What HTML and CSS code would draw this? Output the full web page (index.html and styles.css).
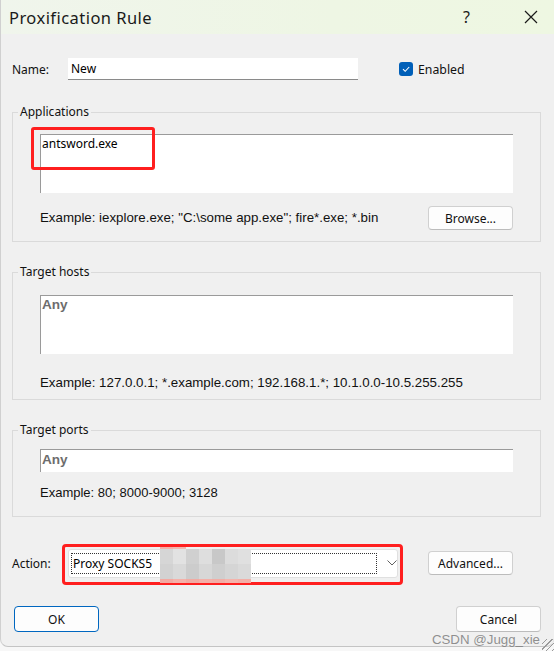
FILE: index.html
```html
<!DOCTYPE html>
<html>
<head>
<meta charset="utf-8">
<link rel="stylesheet" href="styles.css">
</head>
<body>
<div class="window">
  <div class="titlebar">
    <span class="title">Proxification Rule</span>
    <span class="help">?</span>
    <span class="close"><svg width="14" height="14" viewBox="0 0 14 14"><path d="M1 1 L13 13 M13 1 L1 13" stroke="#1a1a1a" stroke-width="1.2" fill="none"/></svg></span>
  </div>
  <div class="content">
    <div class="name-row">
      <span class="lbl name-lbl">Name:</span>
      <div class="name-input">New</div>
      <div class="check">
        <span class="box"><svg width="14" height="14" viewBox="0 0 14 14"><path d="M4 7.2 L6.2 9.3 L10.2 5" stroke="#fff" stroke-width="1.1" fill="none"/></svg></span>
        <span class="lbl">Enabled</span>
      </div>
    </div>

    <fieldset class="group g-apps">
      <legend>Applications</legend>
      <div class="inner">
        <div class="area area-apps">antsword.exe<div class="mark mark-apps"></div></div>
        <div class="example-row">
          <span class="example">Example: iexplore.exe; "C:\some app.exe"; fire*.exe; *.bin</span>
          <span class="btn">Browse...</span>
        </div>
      </div>
    </fieldset>

    <fieldset class="group g-hosts">
      <legend>Target hosts</legend>
      <div class="inner">
        <div class="area area-hosts"><span class="any">Any</span></div>
        <div class="example ex-hosts">Example: 127.0.0.1; *.example.com; 192.168.1.*; 10.1.0.0-10.5.255.255</div>
      </div>
    </fieldset>

    <fieldset class="group g-ports">
      <legend>Target ports</legend>
      <div class="inner">
        <div class="area area-ports"><span class="any">Any</span></div>
        <div class="example ex-ports">Example: 80; 8000-9000; 3128</div>
      </div>
    </fieldset>

    <div class="action-row">
      <span class="lbl action-lbl">Action:</span>
      <div class="combo">
        <div class="focus">Proxy SOCKS5</div>
        <svg class="chev" width="10" height="6" viewBox="0 0 10 6"><path d="M0.5 0.5 L5 5 L9.5 0.5" stroke="#606060" stroke-width="1" fill="none"/></svg>
        <div class="mark mark-action"></div>
        <div class="mosaic">
          <i style="background:#f3b0a8"></i><i style="background:#f0b8b0"></i><i style="background:transparent"></i><i style="background:transparent"></i><i style="background:transparent"></i><i style="background:transparent"></i><i style="background:transparent"></i>
          <i style="background:#d6d6d6"></i><i style="background:#e2e2e2"></i><i style="background:#d0d0d0"></i><i style="background:#dedede"></i><i style="background:#c8c8c8"></i><i style="background:#dcdcdc"></i><i style="background:#e0e0e0"></i>
          <i style="background:#d2d2d2"></i><i style="background:#d9d9d9"></i><i style="background:#cccccc"></i><i style="background:#d7d7d7"></i><i style="background:#cfcfcf"></i><i style="background:#d5d5d5"></i><i style="background:#dadada"></i>
          <i style="background:#f2aaa2"></i><i style="background:#f4b2aa"></i><i style="background:#f0aca4"></i><i style="background:#f3b0a8"></i><i style="background:#f1aea6"></i><i style="background:#f4b4ac"></i><i style="background:#f2b0a8"></i>
        </div>
      </div>
      <span class="btn btn-adv">Advanced...</span>
    </div>

    <div class="buttons-row">
      <span class="btn btn-ok">OK</span>
      <span class="btn btn-cancel">Cancel</span>
    </div>
    <span class="watermark">CSDN @Jugg_xie</span>
  </div>
</div>
<div class="grip"></div>
</body>
</html>
```

FILE: styles.css
```css
html, body {
  margin: 0;
  padding: 0;
}
body {
  width: 554px;
  height: 651px;
  background: #f7f7f7;
  position: relative;
  overflow: hidden;
  font-family: "Liberation Sans", Arial, sans-serif;
  font-size: 12px;
  color: #000;
}
.window {
  width: 554px;
  height: 647px;
  background: #f0f0f0;
  border-bottom: 1px solid #c4c4c4;
  border-left: 1px solid #d0d0d0;
  box-sizing: border-box;
  border-radius: 0 0 8px 8px;
  position: relative;
}
.titlebar {
  height: 34px;
  background: linear-gradient(90deg, #f0f5ec 0%, #eef6e4 60%, #eef7e2 100%);
  display: flex;
  align-items: center;
  font-family: "Noto Sans", "Open Sans", sans-serif;
}
.title {
  font-size: 16.5px;
  letter-spacing: 0.45px;
  color: #1a1a1a;
  margin-left: 8px;
  flex: 1;
}
.help {
  font-size: 16px;
  color: #1a1a1a;
  width: 16px;
  margin-right: 45px;
}
.close {
  display: flex;
  margin-right: 16px;
}
.content {
  padding: 24px 13px 0 11px;
  position: relative;
}
.lbl {
  font-family: "Noto Sans", "Open Sans", sans-serif;
  font-size: 12px;
  color: #111;
}
.name-row {
  display: flex;
  align-items: center;
  height: 22px;
}
.name-lbl {
  width: 56px;
}
.name-input {
  width: 290px;
  height: 22px;
  box-sizing: border-box;
  background: #fff;
  border-bottom: 1px solid #8a8a8a;
  padding: 2px 3px 0;
  font-family: "Noto Sans", "Open Sans", sans-serif;
  font-size: 12px;
  line-height: 17px;
}
.check {
  display: flex;
  align-items: center;
  margin-left: 41px;
}
.box {
  width: 14px;
  height: 14px;
  background: #005fb8;
  border-radius: 3px;
  display: flex;
  margin-right: 5px;
}
.box svg { display: block; }
.check .lbl { font-size: 12.3px; }

.group {
  margin: 24px 0 0 0;
  padding: 0;
  border: 1px solid #dadada;
  min-width: 0;
}
.group legend {
  font-family: "Noto Sans", "Open Sans", sans-serif;
  font-size: 12px;
  line-height: 16px;
  padding: 0 2px;
  margin-left: 5px;
  color: #111;
}
.g-hosts, .g-ports { margin-top: 22px; }
.inner {
  padding: 0 27px;
}
.area {
  background: #fff;
  border-top: 1px solid #9a9a9a;
  border-left: 1px solid #9a9a9a;
  box-sizing: border-box;
  padding: 1px 1px;
  line-height: 16px;
  font-family: "Liberation Sans", Arial, sans-serif;
  font-size: 12px;
  position: relative;
}
.area-apps {
  margin-top: 14px;
  height: 59px;
  font-family: "Noto Sans", "Open Sans", sans-serif;
  font-size: 12px;
}
.area-hosts {
  margin-top: 15px;
  height: 59px;
}
.area-ports {
  margin-top: 11px;
  height: 23px;
  padding-top: 2px;
}
.any {
  font-weight: bold;
  color: #6d6d6d;
  font-family: "Liberation Sans", Arial, sans-serif;
  font-size: 13.6px;
}
.mark {
  position: absolute;
  border: 3px solid #ff1f1f;
  border-radius: 3px;
  box-sizing: border-box;
}
.mark-apps {
  left: -10px;
  top: -8px;
  width: 124px;
  height: 43px;
}
.example {
  font-family: "Liberation Sans", Arial, sans-serif;
  font-size: 13.3px;
  line-height: 16px;
  color: #111;
}
.example-row {
  margin-top: 13px;
  padding-bottom: 11px;
  display: flex;
  align-items: center;
  justify-content: space-between;
}
.ex-hosts {
  margin-top: 21px;
  padding-bottom: 8px;
}
.ex-ports {
  margin-top: 13px;
  padding-bottom: 15px;
  font-size: 13px;
}
.btn {
  display: flex;
  align-items: center;
  justify-content: center;
  width: 85px;
  height: 24px;
  box-sizing: border-box;
  background: #fdfdfd;
  border: 1px solid #d0d0d0;
  border-bottom-color: #bcbcbc;
  border-radius: 4px;
  font-family: "Noto Sans", "Open Sans", sans-serif;
  font-size: 12px;
  color: #111;
}
.action-row {
  margin-top: 31px;
  display: flex;
  align-items: center;
  height: 30px;
}
.action-lbl {
  width: 56px;
}
.combo {
  width: 330px;
  height: 29px;
  box-sizing: border-box;
  background: #fff;
  border: 1px solid #e0e0e0;
  border-radius: 3px;
  position: relative;
  display: flex;
  align-items: center;
}
.focus {
  margin-left: 2px;
  width: 306px;
  height: 21px;
  box-sizing: border-box;
  border: 1px dotted #333;
  font-family: "Noto Sans", "Open Sans", sans-serif;
  font-size: 12px;
  line-height: 19px;
  padding-left: 1px;
}
.chev {
  margin-left: 10px;
}
.mosaic {
  position: absolute;
  left: 91px;
  top: -3px;
  width: 91px;
  height: 37px;
  display: grid;
  grid-template-columns: repeat(7, 13px);
  grid-template-rows: 2px 15px 15px 4px;
}
.mosaic i { display: block; }
.mark-action {
  left: -7px;
  top: -6px;
  width: 341px;
  height: 41px;
  border-radius: 4px;
}
.btn-adv {
  margin-left: 30px;
}
.buttons-row {
  margin-top: 28px;
  display: flex;
  justify-content: space-between;
  padding-left: 2px;
}
.btn-ok {
  height: 26px;
  border: 1px solid #0067c0;
  border-radius: 4px;
}
.btn-cancel {
  height: 26px;
  margin-right: 0;
}
.watermark {
  position: absolute;
  right: 14px;
  bottom: -15px;
  font-family: "Liberation Sans", Arial, sans-serif;
  font-size: 13.3px;
  color: rgba(110, 110, 110, 0.75);
}
.grip {
  position: absolute;
  right: 0;
  bottom: 0;
  width: 12px;
  height: 12px;
  background: repeating-linear-gradient(135deg, transparent 0 3px, #9a9a9a 3px 4px);
}
```
